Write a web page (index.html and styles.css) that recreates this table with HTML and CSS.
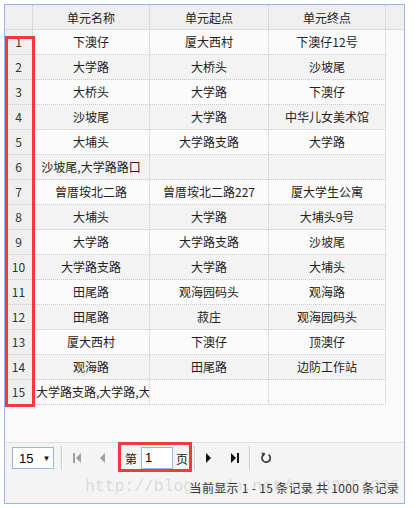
FILE: index.html
```html
<!DOCTYPE html>
<html lang="zh-CN">
<head>
<meta charset="utf-8">
<title>datagrid</title>
<link rel="stylesheet" href="styles.css">
</head>
<body>
<div class="panel">
  <div class="head">
    <div class="hc rn"></div>
    <div class="hc">单元名称</div>
    <div class="hc">单元起点</div>
    <div class="hc">单元终点</div>
    <div class="hc fill"></div>
  </div>
  <div class="rows">
    <div class="row"><div class="c rn">1</div><div class="c">下澳仔</div><div class="c">厦大西村</div><div class="c">下澳仔12号</div><div class="c fill"></div></div>
    <div class="row alt"><div class="c rn">2</div><div class="c">大学路</div><div class="c">大桥头</div><div class="c">沙坡尾</div><div class="c fill"></div></div>
    <div class="row"><div class="c rn">3</div><div class="c">大桥头</div><div class="c">大学路</div><div class="c">下澳仔</div><div class="c fill"></div></div>
    <div class="row alt"><div class="c rn">4</div><div class="c">沙坡尾</div><div class="c">大学路</div><div class="c">中华儿女美术馆</div><div class="c fill"></div></div>
    <div class="row"><div class="c rn">5</div><div class="c">大埔头</div><div class="c">大学路支路</div><div class="c">大学路</div><div class="c fill"></div></div>
    <div class="row alt"><div class="c rn">6</div><div class="c">沙坡尾,大学路路口</div><div class="c"></div><div class="c"></div><div class="c fill"></div></div>
    <div class="row"><div class="c rn">7</div><div class="c">曾厝垵北二路</div><div class="c">曾厝垵北二路227</div><div class="c">厦大学生公寓</div><div class="c fill"></div></div>
    <div class="row alt"><div class="c rn">8</div><div class="c">大埔头</div><div class="c">大学路</div><div class="c">大埔头9号</div><div class="c fill"></div></div>
    <div class="row"><div class="c rn">9</div><div class="c">大学路</div><div class="c">大学路支路</div><div class="c">沙坡尾</div><div class="c fill"></div></div>
    <div class="row alt"><div class="c rn">10</div><div class="c">大学路支路</div><div class="c">大学路</div><div class="c">大埔头</div><div class="c fill"></div></div>
    <div class="row"><div class="c rn">11</div><div class="c">田尾路</div><div class="c">观海园码头</div><div class="c">观海路</div><div class="c fill"></div></div>
    <div class="row alt"><div class="c rn">12</div><div class="c">田尾路</div><div class="c">菽庄</div><div class="c">观海园码头</div><div class="c fill"></div></div>
    <div class="row"><div class="c rn">13</div><div class="c">厦大西村</div><div class="c">下澳仔</div><div class="c">顶澳仔</div><div class="c fill"></div></div>
    <div class="row alt"><div class="c rn">14</div><div class="c">观海路</div><div class="c">田尾路</div><div class="c">边防工作站</div><div class="c fill"></div></div>
    <div class="row"><div class="c rn">15</div><div class="c">大学路支路,大学路,大埔头</div><div class="c"></div><div class="c"></div><div class="c fill"></div></div>
  </div>
  <div class="spacer"></div>
  <div class="pager">
    <div class="bar">
      <div class="sel"><span>15</span><span class="arr">▼</span></div>
      <div class="sep s1"></div>
      <div class="btn b-first"><svg width="16" height="16" viewBox="0 0 16 16"><rect x="4" y="3" width="2" height="10" fill="#a0a0a0"/><path d="M12 3 L7 8 L12 13 Z" fill="#a0a0a0"/></svg></div>
      <div class="btn b-prev"><svg width="16" height="16" viewBox="0 0 16 16"><path d="M11 3 L6 8 L11 13 Z" fill="#a0a0a0"/></svg></div>
      <span class="lbl l1">第</span>
      <div class="num">1</div>
      <span class="lbl l2">页</span>
      <div class="sep s2"></div>
      <div class="btn b-next"><svg width="16" height="16" viewBox="0 0 16 16"><path d="M5 3 L10 8 L5 13 Z" fill="#111"/></svg></div>
      <div class="btn b-last"><svg width="16" height="16" viewBox="0 0 16 16"><path d="M4 3 L9 8 L4 13 Z" fill="#111"/><rect x="10" y="3" width="2" height="10" fill="#111"/></svg></div>
      <div class="sep s3"></div>
      <div class="btn b-ref"><svg width="16" height="16" viewBox="0 0 16 16"><path d="M10.6 4.6 A4.2 4.2 0 1 1 5.2 4.9" fill="none" stroke="#333" stroke-width="1.6"/><path d="M3.2 2.6 L7.4 3.2 L5.6 6.8 Z" fill="#333"/></svg></div>
    </div>
    <div class="info">当前显示 1 - 15 条记录 共 1000 条记录</div>
  </div>
</div>
<div class="mark">http://blog.csdn.net/qq_33951285</div>
<div class="redbox rb1"></div>
<div class="redbox rb2"></div>
</body>
</html>
```
FILE: styles.css
```css
html, body {
  margin: 0;
  padding: 0;
  background: #ffffff;
}
body {
  position: relative;
  width: 416px;
  height: 508px;
  font-family: "Noto Sans CJK SC", "Microsoft YaHei", sans-serif;
  font-size: 12px;
  color: #222;
}
.panel {
  margin: 4px 0 0 4px;
  width: 399px;
  height: 498px;
  border: 1px solid #95b8e7;
  background: #fafafa;
  display: flex;
  flex-direction: column;
}
.head, .row {
  display: grid;
  grid-template-columns: 28px 117px 119px 117px 18px;
}
.head {
  height: 25px;
  background: #efefef;
  border-bottom: 1px solid #dcdcdc;
  box-sizing: border-box;
}
.hc {
  box-sizing: border-box;
  border-right: 1px dotted #c8c8c8;
  display: flex;
  align-items: center;
  justify-content: center;
  color: #222;
}
.hc.fill { border-right: none; }
.row {
  height: 25px;
  background: #fbfbfb;
}
.row.alt { background: #f3f3f3; }
.c {
  box-sizing: border-box;
  border-right: 1px dotted #c8c8c8;
  border-bottom: 1px dotted #c8c8c8;
  line-height: 24px;
  text-align: center;
  white-space: nowrap;
  overflow: hidden;
  padding: 0 3px;
  color: #222;
}
.c.rn {
  background: #efefef;
  padding: 0;
  color: #333;
}
.c.fill {
  border: none;
  background: #fafafa;
}
.spacer { flex: 1; }
.pager {
  height: 60px;
  border-top: 1px solid #dddddd;
  background: #f4f4f4;
  box-sizing: content-box;
}
.bar {
  display: flex;
  align-items: center;
  height: 22px;
  margin-top: 4px;
  padding-left: 7px;
}
.sel {
  width: 42px;
  height: 22px;
  box-sizing: border-box;
  border: 1px solid #95b8e7;
  background: #fff;
  display: flex;
  align-items: center;
  font-family: "Liberation Sans", "Noto Sans CJK SC", sans-serif;
  font-size: 13px;
  color: #000;
}
.sel span:first-child { margin-left: 6px; }
.sel .arr {
  font-size: 8px;
  margin-left: 9px;
  color: #111;
}
.sep {
  width: 1px;
  height: 24px;
  background: #cccccc;
  border-right: 1px solid #ffffff;
}
.s1 { margin-left: 7px; }
.s2 { margin-left: 6px; }
.s3 { margin-left: 2px; }
.btn {
  width: 24px;
  height: 22px;
  display: flex;
  align-items: center;
  justify-content: center;
}
.b-first { margin-left: 2px; }
.b-prev { margin-left: 1px; }
.b-next { margin-left: 1px; }
.b-last { margin-left: 2px; }
.b-ref { margin-left: 3px; }
.lbl {
  font-size: 12px;
  color: #222;
}
.l1 { margin-left: 11px; }
.l2 { margin-left: 3px; }
.num {
  margin-left: 4px;
  width: 32px;
  height: 22px;
  box-sizing: border-box;
  border: 1px solid #95b8e7;
  background: #fff;
  font-family: "Liberation Sans", sans-serif;
  font-size: 13px;
  line-height: 20px;
  padding-left: 3px;
  color: #000;
}
.info {
  margin-top: 11px;
  text-align: right;
  padding-right: 5px;
  font-size: 12px;
  letter-spacing: 0.3px;
  color: #333;
  line-height: 16px;
}
.mark {
  position: absolute;
  left: 85px;
  top: 477px;
  font-family: "Liberation Mono", monospace;
  font-size: 16.4px;
  line-height: 20px;
  color: rgba(120, 120, 120, 0.22);
  white-space: nowrap;
  pointer-events: none;
}
.redbox {
  position: absolute;
  border: 3px solid #f23a3a;
  box-sizing: border-box;
}
.rb1 {
  left: 5px;
  top: 36px;
  width: 30px;
  height: 371px;
}
.rb2 {
  left: 118px;
  top: 442px;
  width: 74px;
  height: 30px;
}
```
